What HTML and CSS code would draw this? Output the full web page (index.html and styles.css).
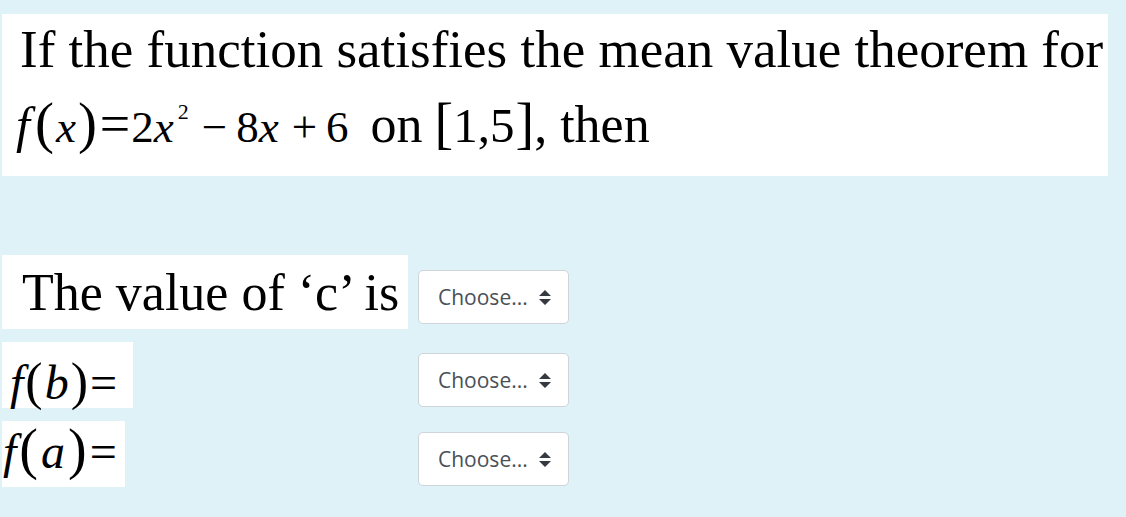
FILE: index.html
```html
<!DOCTYPE html>
<html>
<head>
<meta charset="utf-8">
<link rel="stylesheet" href="styles.css">
</head>
<body>
<div class="page">
  <div class="intro">
    <div class="line1">If the function satisfies the mean value theorem for</div>
    <div class="line2"><span class="m it mf">f</span><span class="par">(</span><span class="m it">x</span><span class="par">)</span><span class="m eq">=</span><span class="m">2</span><span class="m it">x</span><span class="sup">2</span><span class="m op">−</span><span class="m">8</span><span class="m it">x</span><span class="m op">+</span><span class="m">6</span><span class="txt on">on</span><span class="brk">[</span><span class="iv">1,5</span><span class="brk">]</span><span class="txt">, then</span></div>
  </div>

  <div class="rows">
    <div class="row">
      <div class="label label-c">The value of ‘c’ is</div>
      <div class="select sel-c"><span>Choose...</span><svg class="caret" viewBox="0 0 4 5" width="12" height="15"><path d="M2 0L0 2h4zm0 5L0 3h4z" fill="#343a40"/></svg></div>
    </div>
    <div class="row">
      <div class="label label-fb"><span class="fm it">f</span><span class="fp">(</span><span class="fm it">b</span><span class="fp">)</span><span class="fm feq">=</span></div>
      <div class="select sel-f"><span>Choose...</span><svg class="caret" viewBox="0 0 4 5" width="12" height="15"><path d="M2 0L0 2h4zm0 5L0 3h4z" fill="#343a40"/></svg></div>
    </div>
    <div class="row">
      <div class="label label-fa"><span class="fm it">f</span><span class="fp fpa">(</span><span class="fm it">a</span><span class="fp fpa">)</span><span class="fm feq">=</span></div>
      <div class="select sel-f"><span>Choose...</span><svg class="caret" viewBox="0 0 4 5" width="12" height="15"><path d="M2 0L0 2h4zm0 5L0 3h4z" fill="#343a40"/></svg></div>
    </div>
  </div>
</div>
</body>
</html>
```

FILE: styles.css
```css
html, body {
  margin: 0;
  padding: 0;
}
body {
  background: #def2f8;
  width: 1126px;
  height: 517px;
  overflow: hidden;
  font-family: "Liberation Serif", "Times New Roman", serif;
  color: #000;
}
.page {
  padding-top: 14px;
  padding-left: 2px;
}
.intro {
  background: #fff;
  width: 1106px;
  height: 162px;
  box-sizing: border-box;
  padding-left: 18px;
  font-size: 53px;
  white-space: nowrap;
}
.line1 {
  line-height: 70px;
}
.line2 {
  line-height: 81px;
  margin-left: -4px;
}
.line2 span {
  line-height: 1;
}
.it {
  font-family: "Liberation Serif", "Times New Roman", serif;
  font-style: italic;
}
.m { font-size: 45px; }
.mf { font-size: 50px; margin-right: 3px; }
.par { font-size: 57px; margin: 0 2px; }
.eq { font-size: 54px; margin: 0 1px; }
.sup {
  font-size: 22px;
  vertical-align: 23px;
  margin-left: 4px;
}
.op { margin: 0 9px 0 13px; }
.txt { font-size: 52px; }
.on { margin-left: 22px; margin-right: 12px; }
.brk { font-size: 56px; }
.iv { font-size: 49px; letter-spacing: 0; margin-right: 1px; }

.rows {
  margin-top: 79px;
  display: flex;
  flex-direction: column;
  gap: 13px;
}
.row {
  display: flex;
  align-items: flex-start;
}
.label {
  background: #fff;
  box-sizing: border-box;
  white-space: nowrap;
}
.label-c {
  width: 406px;
  height: 74px;
  padding-left: 20px;
  padding-top: 1px;
  font-size: 52px;
  line-height: 74px;
  margin-right: 10px;
}
.label-fb {
  width: 131px;
  height: 66px;
  padding-left: 8px;
  padding-top: 14px;
  line-height: 56px;
  margin-right: 285px;
}
.label-fa {
  width: 123px;
  height: 66px;
  padding-left: 1px;
  line-height: 50px;
  margin-right: 293px;
}
.label-fb span, .label-fa span { line-height: 1; }
.fm { font-size: 48px; }
.fp { font-size: 52px; margin: 0 2px; }
.fpa { font-size: 56px; margin: 0 3px; }
.feq { font-size: 48px; margin-left: 0; }

.select {
  width: 151px;
  height: 54px;
  box-sizing: border-box;
  background: #fff;
  border: 1px solid #ced4da;
  border-radius: 5px;
  display: flex;
  align-items: center;
  padding-left: 19px;
  font-family: "Open Sans", "Noto Sans", sans-serif;
  font-size: 21px;
  color: #495057;
}
.select span {
  flex: none;
}
.caret {
  margin-left: 11px;
  flex: none;
}
.sel-c { margin-top: 15px; }
.sel-f { margin-top: 11px; }
```
